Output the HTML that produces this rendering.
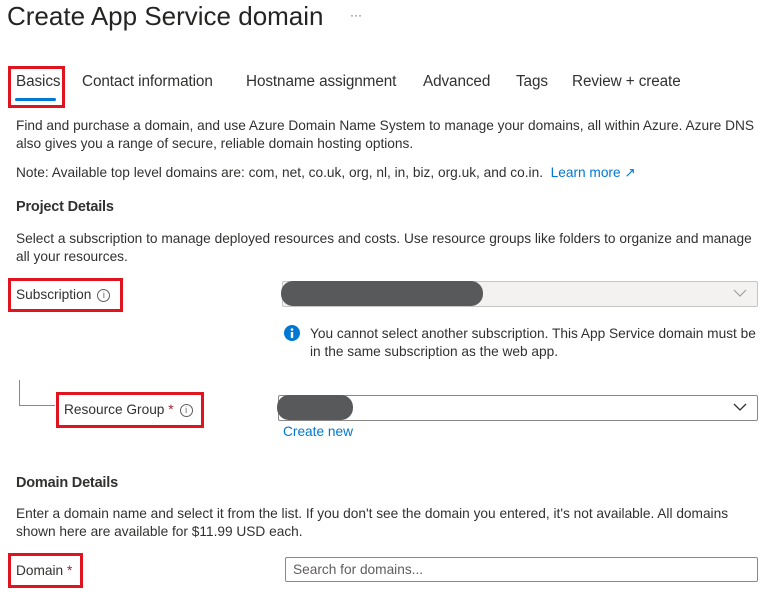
<!DOCTYPE html>
<html><head><meta charset="utf-8"><style>
body{margin:0;width:768px;height:593px;background:#fff;position:relative;overflow:hidden;font-family:"Liberation Sans",sans-serif;color:#323130}
.a{position:absolute;white-space:nowrap}
.t{font-size:13.7px;letter-spacing:0}
.h{font-size:14.5px;font-weight:bold;letter-spacing:-0.2px;color:#323130}
.red{position:absolute;border:3px solid #e0141e;box-sizing:border-box}
.tab{font-size:15.3px;top:73px;color:#323130;letter-spacing:-0.1px}
.star{color:#a4262c}
.ic{display:inline-block;width:11px;height:11px;border:1px solid #605e5c;border-radius:50%;font-size:9px;line-height:11px;text-align:center;color:#605e5c;vertical-align:1px;margin-left:6px}
.dd{position:absolute;border:1px solid #a19f9d;box-sizing:border-box;border-radius:2px}
.blob{position:absolute;background:#58595b;border-radius:12px}
</style></head><body>
<div class="a" style="left:7px;top:1px;font-size:26px;color:#252423">Create App Service domain</div>
<div class="a" style="left:350px;top:8px;font-size:12px;color:#605e5c">···</div>

<div class="a tab" style="left:16px;">Basics</div>
<div class="a" style="left:15px;top:98px;width:41px;height:3px;background:#0078d4;border-radius:2px"></div>
<div class="red" style="left:8px;top:66px;width:57px;height:42px"></div>
<div class="a tab" style="left:82px">Contact information</div>
<div class="a tab" style="left:246px">Hostname assignment</div>
<div class="a tab" style="left:423px">Advanced</div>
<div class="a tab" style="left:516px">Tags</div>
<div class="a tab" style="left:572px">Review + create</div>

<div class="a t" style="left:16px;top:118px">Find and purchase a domain, and use Azure Domain Name System to manage your domains, all within Azure. Azure DNS</div>
<div class="a t" style="left:16px;top:136px">also gives you a range of secure, reliable domain hosting options.</div>
<div class="a t" style="left:16px;top:165px">Note: Available top level domains are: com, net, co.uk, org, nl, in, biz, org.uk, and co.in. &nbsp;<span style="color:#0078d4">Learn more ↗</span></div>

<div class="a h" style="left:16px;top:199px">Project Details</div>
<div class="a t" style="left:16px;top:231px">Select a subscription to manage deployed resources and costs. Use resource groups like folders to organize and manage</div>
<div class="a t" style="left:16px;top:249px">all your resources.</div>

<div class="a t" style="left:16px;top:287px">Subscription<span class="ic">i</span></div>
<div class="red" style="left:8px;top:278px;width:115px;height:34px"></div>
<div class="dd" style="left:282px;top:281px;width:476px;height:26px;background:#f3f2f1;border-color:#c8c6c4"></div>
<div class="blob" style="left:281px;top:281px;width:202px;height:25px"></div>
<svg class="a" style="left:733px;top:289px" width="14" height="9"><path d="M1 1l6 6 6-6" fill="none" stroke="#a19f9d" stroke-width="1.2"/></svg>

<svg class="a" style="left:284px;top:325px" width="16" height="16"><circle cx="8" cy="8" r="8" fill="#0078d4"/><rect x="6.8" y="7" width="2.4" height="6" fill="#fff"/><circle cx="8" cy="4.5" r="1.3" fill="#fff"/></svg>
<div class="a t" style="left:310px;top:326px">You cannot select another subscription. This App Service domain must be</div>
<div class="a t" style="left:310px;top:344px">in the same subscription as the web app.</div>

<div class="a" style="left:19px;top:380px;width:1px;height:26px;background:#8a8886"></div>
<div class="a" style="left:19px;top:405px;width:36px;height:1px;background:#8a8886"></div>
<div class="a t" style="left:64px;top:402px">Resource Group <span class="star">*</span><span class="ic">i</span></div>
<div class="red" style="left:56px;top:392px;width:148px;height:36px"></div>
<div class="dd" style="left:278px;top:395px;width:480px;height:26px;border-color:#8a8886"></div>
<div class="blob" style="left:277px;top:395px;width:76px;height:25px"></div>
<svg class="a" style="left:733px;top:403px" width="14" height="9"><path d="M1 1l6 6 6-6" fill="none" stroke="#323130" stroke-width="1.3"/></svg>
<div class="a t" style="left:283px;top:424px;color:#0078d4">Create new</div>

<div class="a h" style="left:16px;top:475px">Domain Details</div>
<div class="a t" style="left:16px;top:506px">Enter a domain name and select it from the list. If you don't see the domain you entered, it's not available. All domains</div>
<div class="a t" style="left:16px;top:524px">shown here are available for $11.99 USD each.</div>

<div class="a t" style="left:16px;top:563px">Domain <span class="star">*</span></div>
<div class="red" style="left:8px;top:553px;width:75px;height:35px"></div>
<div class="dd" style="left:285px;top:557px;width:473px;height:25px;border-color:#8a8886"></div>
<div class="a t" style="left:293px;top:562px;color:#605e5c">Search for domains...</div>
</body></html>
